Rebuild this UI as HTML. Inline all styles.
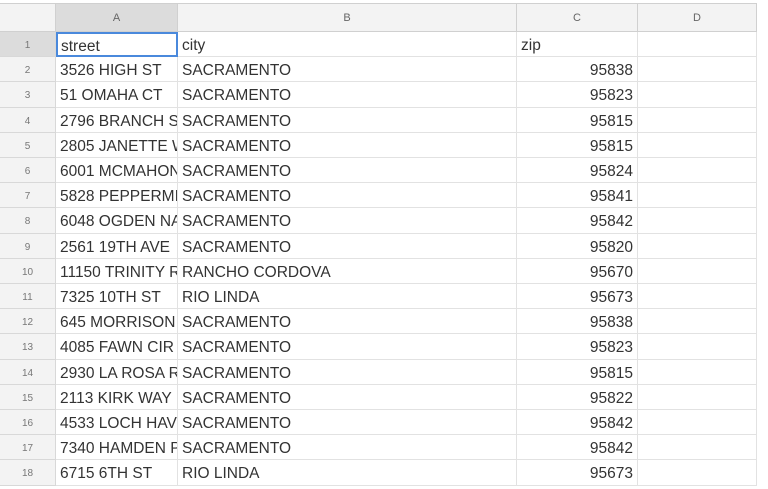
<!DOCTYPE html>
<html><head><meta charset="utf-8"><style>
body{margin:0;width:768px;height:489px;background:#fff;overflow:hidden;font-family:"Liberation Sans",Arial,sans-serif;position:relative;}
.c{position:absolute;box-sizing:border-box;border-right:1px solid #e2e2e2;border-bottom:1px solid #e2e2e2;overflow:hidden;white-space:nowrap;font-size:15.5px;color:#333;padding:2px 4px 0 4px;line-height:24px;}
.h{background:#f3f3f3;color:#666;font-size:11px;text-align:center;border-color:#d0d0d0;line-height:28px;padding-top:0;}
.n{background:#f3f3f3;color:#777;font-size:10px;text-align:center;border-color:#d8d8d8;}
.r{text-align:right;}
.sel{background:#dcdcdc;}
.act{border:2px solid #4a89dc;line-height:21px;padding-left:3px;}
</style></head><body>
<div id="g"></div>
<script>
var cols=[0,56,178,517,638,757];
var rows=[["street","city","zip"],["3526 HIGH ST","SACRAMENTO","95838"],["51 OMAHA CT","SACRAMENTO","95823"],["2796 BRANCH ST","SACRAMENTO","95815"],["2805 JANETTE WAY","SACRAMENTO","95815"],["6001 MCMAHON DR","SACRAMENTO","95824"],["5828 PEPPERMILL CT","SACRAMENTO","95841"],["6048 OGDEN NASH WAY","SACRAMENTO","95842"],["2561 19TH AVE","SACRAMENTO","95820"],["11150 TRINITY RIVER DR","RANCHO CORDOVA","95670"],["7325 10TH ST","RIO LINDA","95673"],["645 MORRISON AVE","SACRAMENTO","95838"],["4085 FAWN CIR","SACRAMENTO","95823"],["2930 LA ROSA RD","SACRAMENTO","95815"],["2113 KIRK WAY","SACRAMENTO","95822"],["4533 LOCH HAVEN WAY","SACRAMENTO","95842"],["7340 HAMDEN PL","SACRAMENTO","95842"],["6715 6TH ST","RIO LINDA","95673"]];
var h="";
function cell(x0,x1,y0,y1,cls,t){h+='<div class="c '+cls+'" style="left:'+x0+'px;top:'+y0+'px;width:'+(x1-x0)+'px;height:'+(y1-y0)+'px">'+t+'</div>';}
var hd=["","A","B","C","D"];
h+='<div style="position:absolute;left:0;top:3px;width:757px;height:1px;background:#d0d0d0"></div>';
for(var i=0;i<5;i++)cell(cols[i],cols[i+1],4,32,"h"+(i==1?" sel":""),hd[i]);
for(var r=0;r<18;r++){var y0=Math.round(32+r*25.2),y1=Math.round(32+(r+1)*25.2);
cell(0,56,y0,y1,"n"+(r==0?" sel":""),r+1);
cell(56,178,y0,y1,r==0?"act":"",rows[r][0]);
cell(178,517,y0,y1,"",rows[r][1]);
cell(517,638,y0,y1,r==0?"":"r",rows[r][2]);
cell(638,757,y0,y1,"","");}
document.getElementById("g").innerHTML=h;
</script>
</body></html>
